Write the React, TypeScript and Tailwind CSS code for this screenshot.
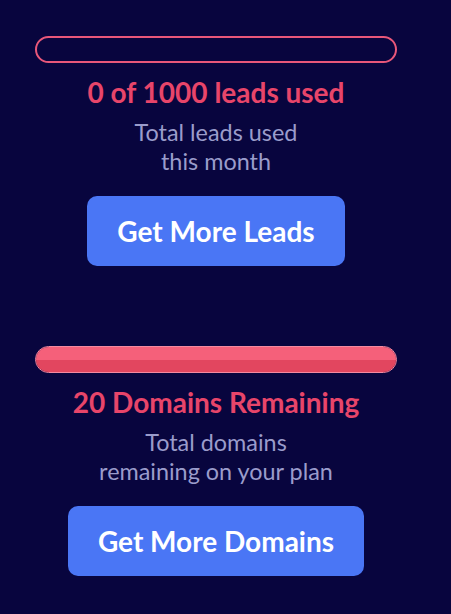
import React from "react";

interface UsageBlockProps {
  filled: boolean;
  title: string;
  lines: string[];
  cta: string;
}

function UsageBlock({ filled, title, lines, cta }: UsageBlockProps) {
  return (
    <div className="flex flex-col items-center">
      {/* Progress bar */}
      {filled ? (
        <div className="w-full h-[27px] rounded-full border border-[#f38aa0] overflow-hidden flex flex-col">
          <div className="h-1/2 bg-[#f5607a]" />
          <div className="h-1/2 bg-[#e2465f]" />
        </div>
      ) : (
        <div className="w-full h-[27px] rounded-full border-2 border-[#e8577a]" />
      )}

      <h3 className="mt-[12px] text-[28px] leading-[34px] font-bold text-[#e8456a] whitespace-nowrap">
        {title}
      </h3>

      <p className="mt-[9px] text-[23.4px] leading-[29px] text-[#9a9ccb] text-center">
        {lines.map((l, i) => (
          <span key={i} className="block">
            {l}
          </span>
        ))}
      </p>

      <button className="mt-[20px] h-[70px] px-[30px] rounded-[10px] bg-[#4a76f5] text-white text-[28px] font-bold whitespace-nowrap">
        {cta}
      </button>
    </div>
  );
}

export default function App() {
  return (
    <div
      className="min-h-screen w-full bg-[#08053e]"
      style={{ fontFamily: "Lato, 'Open Sans', sans-serif" }}
    >
      <div className="w-[362px] ml-[35px] pt-[36px] flex flex-col gap-[80px]">
        <UsageBlock
          filled={false}
          title="0 of 1000 leads used"
          lines={["Total leads used", "this month"]}
          cta="Get More Leads"
        />
        <UsageBlock
          filled
          title="20 Domains Remaining"
          lines={["Total domains", "remaining on your plan"]}
          cta="Get More Domains"
        />
      </div>
    </div>
  );
}
